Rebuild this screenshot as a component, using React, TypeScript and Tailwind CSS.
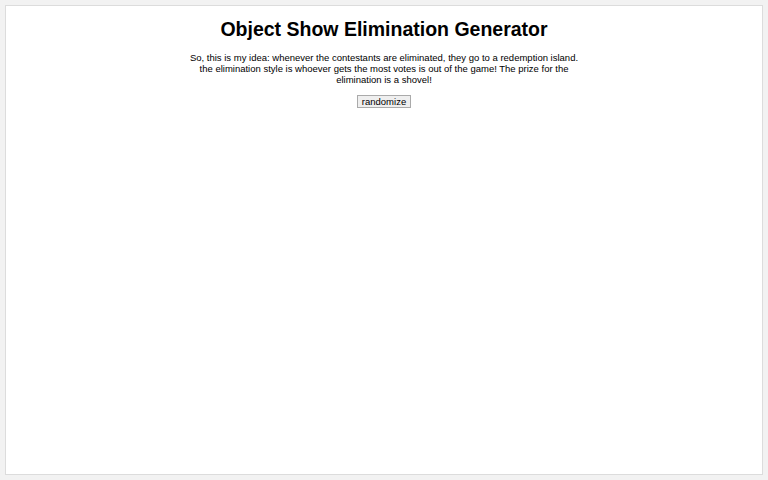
import React from 'react';

export default function App() {
  return (
    <div className="h-[480px] w-[768px] bg-[#f2f2f2] p-[5px] font-['Liberation_Sans',Arial,sans-serif] text-black">
      <div className="flex h-[470px] flex-col items-center border border-[#dcdcdc] bg-white">
        <h1 className="mt-[11px] text-[19.5px] font-bold leading-[24px]">Object Show Elimination Generator</h1>
        <p className="mt-[11px] w-[400px] text-center text-[9.5px] leading-[11px]">
          So, this is my idea: whenever the contestants are eliminated, they go to a redemption island. the elimination style is whoever gets the most votes is out of the game! The prize for the elimination is a shovel!
        </p>
        <button className="mt-[10px] border border-[#aaa] bg-[#efefef] px-[4px] text-[9.5px] leading-[11px]">
          randomize
        </button>
      </div>
    </div>
  );
}
